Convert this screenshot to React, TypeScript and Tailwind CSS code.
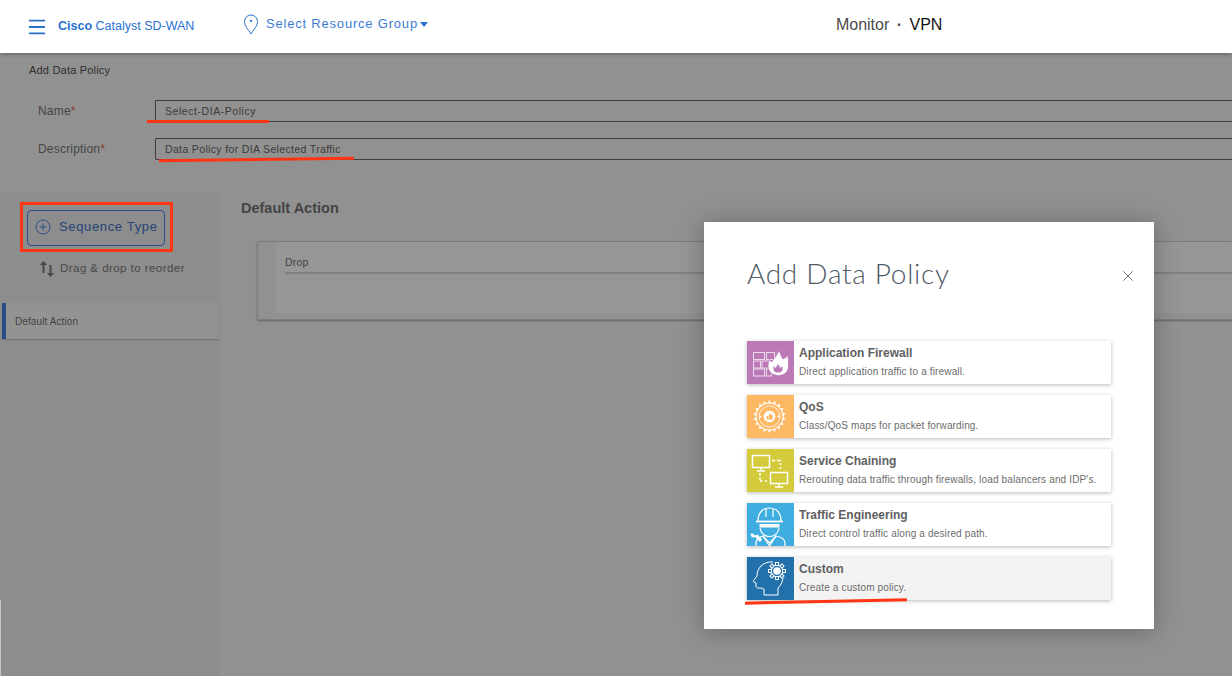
import { Menu, X } from 'lucide-react';

const FONT = "font-['Liberation_Sans',Arial,sans-serif]";

// ─── Tile icons ───────────────────────────────────────────────────────────────

function FirewallIcon() {
  return (
    <svg viewBox="0 0 47 43" className="w-[47px] h-[43px]" fill="none" stroke="#ecd9ea" strokeWidth="1">
      <rect x="6.500" y="11.500" width="11" height="7" />
      <rect x="19.500" y="11.500" width="8" height="7" />
      <rect x="6.500" y="20" width="7" height="7" />
      <rect x="15" y="20" width="8" height="7" />
      <rect x="6.500" y="28" width="11" height="7" />
      <rect x="19.500" y="28" width="5" height="7" />
      <path
        d="M21 25c0-3 1-5 1.500-6.500 1 1 1.500 2 2 2.500 2-3 6-7 7.500-12 1 3 2 6 4 9 1.500-1 4-2 5-3.500.5 4 .5 7 .5 10.500 0 5.500-4 9.500-10 9.500S21 30.500 21 25z"
        fill="#fff"
        stroke="#bb7ab7"
        strokeWidth="0.800"
      />
      <path d="M26.500 25l2 2 2.500-4 2.500 4 2-2v4c-1 2-2 2.500-4.500 2.500s-3.500-.5-4.500-2.500z" fill="#bb7ab7" stroke="none" />
    </svg>
  );
}

function QosIcon() {
  const teeth = Array.from({ length: 18 }, (_, i) => (i * 360) / 18);
  return (
    <svg viewBox="0 0 47 43" className="w-[47px] h-[43px]" fill="none" stroke="#fff">
      <circle cx="22.500" cy="21.500" r="13.500" strokeWidth="1" />
      <circle cx="22.500" cy="21.500" r="10.500" strokeWidth="0.800" />
      {teeth.map((a) => (
        <path key={a} d="M22.500 5l2 3h-4z" fill="#fff" stroke="none" opacity="0.85" transform={`rotate(${a} 22.500 21.500)`} />
      ))}
      <circle cx="22.500" cy="21.500" r="5.800" fill="#fff" stroke="none" />
      <circle cx="13.500" cy="21.500" r="1" fill="#fff" stroke="none" />
      <circle cx="31.500" cy="21.500" r="1" fill="#fff" stroke="none" />
      <path d="M19.500 21h1.500v3.500h-1.500zM21.500 21l1.500-3c1 0 1 1 1 2h2l-.5 4.500h-4z" fill="#fdb863" stroke="none" />
    </svg>
  );
}

function ChainingIcon() {
  return (
    <svg viewBox="0 0 47 43" className="w-[47px] h-[43px]" fill="none" stroke="#fff" strokeWidth="1.500">
      <rect x="5.500" y="6.500" width="17" height="12" />
      <path d="M14 18.500v2.500M10 22h8" />
      <rect x="23.500" y="23.500" width="17" height="11" />
      <path d="M32 34.500v2.500M28 38h8" />
      <path d="M25 11.500h3M30 11.500h4M33.500 14v2M33.500 18v2" />
      <path d="M13 24v2.500M13 28.500v3M13 32h2.500M18 32h2" />
    </svg>
  );
}

function EngineerIcon() {
  return (
    <svg viewBox="0 0 47 43" className="w-[47px] h-[43px]" fill="none" stroke="#fff" strokeWidth="1.200">
      <path d="M11 18c0-8 4.500-13 11.500-13S34 10 34 18" />
      <path d="M19 6v8M26 6v8" />
      <path d="M9 18.500h27" strokeWidth="1.800" />
      <path d="M12.500 21h20v3.500h-20z" fill="#fff" stroke="none" />
      <path d="M13 25c1 5 4.500 8.500 9.500 8.500s8.500-3.500 9.500-8.500" />
      <path d="M9 43v-3c0-3 3-6 7-7l6.500 7 6.500-7c5 1 9 3 9 7v3" />
      <path d="M16 33l6.500 10M29 33l-6.500 10" />
      <path d="M5 30l3 2.500 2.500-1 4.500 5-2 2.500-5-5-3 .5-1.500-3z" fill="#fff" stroke="none" />
    </svg>
  );
}

function HeadIcon() {
  const teeth = Array.from({ length: 8 }, (_, i) => i * 45);
  return (
    <svg viewBox="0 0 47 43" className="w-[47px] h-[43px]" fill="none" stroke="#fff" strokeWidth="1">
      <path d="M17 38v-6c-2-1-4-1-6-1-1 0-2-1-2-2v-3l-2-1c-1 0-1-1 0-2l3-4c0-8 6-14 14-14h2M36 21c-1 5-2 7-5 10v7h-14" />
      <circle cx="30" cy="14" r="6" fill="#2371aa" />
      {teeth.map((a) => (
        <rect key={a} x="28.500" y="5.500" width="3" height="3" fill="#2371aa" transform={`rotate(${a} 30 14)`} />
      ))}
      <circle cx="30" cy="14" r="3.800" fill="#fff" stroke="none" />
    </svg>
  );
}

// ─── Policy tiles ─────────────────────────────────────────────────────────────

const TILES = [
  { title: 'Application Firewall', text: 'Direct application traffic to a firewall.', color: 'bg-[#bb7ab7]', Icon: FirewallIcon },
  { title: 'QoS', text: 'Class/QoS maps for packet forwarding.', color: 'bg-[#fdb863]', Icon: QosIcon },
  { title: 'Service Chaining', text: "Rerouting data traffic through firewalls, load balancers and IDP's.", color: 'bg-[#d3cb3c]', Icon: ChainingIcon },
  { title: 'Traffic Engineering', text: 'Direct control traffic along a desired path.', color: 'bg-[#40ade0]', Icon: EngineerIcon },
  { title: 'Custom', text: 'Create a custom policy.', color: 'bg-[#2371aa]', Icon: HeadIcon, active: true },
];

function Tile({ title, text, color, Icon, active }: (typeof TILES)[number]) {
  return (
    <div className={`flex h-[43px] w-[364px] shadow-[0_1px_4px_rgba(0,0,0,0.28)] ${active ? 'bg-[#f3f3f3]' : 'bg-white'}`}>
      <div className={`w-[47px] shrink-0 ${color}`}>
        <Icon />
      </div>
      <div className="pl-[5px] pt-[5px]">
        <div className="text-[12px] leading-[14px] font-bold text-[#606060]">{title}</div>
        <div className="mt-[6px] text-[10px] leading-[12px] tracking-[0.15px] text-[#6b6b6b] whitespace-nowrap">{text}</div>
      </div>
    </div>
  );
}

function Mark({ className }: { className: string }) {
  return <div className={`absolute h-[3px] bg-[#ff3514] ${className}`} />;
}

export default function App() {
  return (
    <div className={`relative w-[1232px] h-[676px] overflow-hidden bg-[#919191] ${FONT}`}>
      {/* Header */}
      <header className="relative z-10 flex items-center h-[53px] bg-white shadow-[0_1px_4px_rgba(0,0,0,0.35)]">
        <Menu className="ml-[26px] w-[22px] h-[22px] text-[#2a6fc4]" strokeWidth={2} />
        <div className="ml-[10px] w-[136px] text-[12.500px] text-[#2a72d0] whitespace-nowrap">
          <span className="font-bold">Cisco</span> Catalyst SD-WAN
        </div>
        <div className="ml-[49px] flex items-center -mt-[5px]">
          <svg viewBox="0 0 16 21" className="w-[16px] h-[21px]" fill="none" stroke="#2a72d0" strokeWidth="1">
            <path d="M8 20C5 15 1.500 12 1.500 7.500a6.500 6.500 0 0 1 13 0C14.500 12 11 15 8 20z" />
            <circle cx="8" cy="7" r="0.800" fill="#2a72d0" />
          </svg>
          <span className="ml-[7px] text-[13px] tracking-[0.8px] text-[#3a7cd2]">Select Resource Group</span>
          <svg viewBox="0 0 8 5" className="ml-[2px] w-[8px] h-[5px]" fill="#2a72d0">
            <path d="M0 0h8L4 5z" />
          </svg>
        </div>
        <div className="ml-[408px] -mt-[4px] text-[16px] text-[#4a4a4a] whitespace-nowrap">
          Monitor <span className="mx-[3px] font-bold">·</span> <span className="text-[#111]">VPN</span>
        </div>
      </header>

      {/* Form */}
      <div className="pl-[29px] pt-[11px] h-[139px]">
        <div className="text-[11px] leading-[13px] tracking-[0.2px] text-[#2e2e2e]">Add Data Policy</div>
        <div className="mt-[23px] flex items-center">
          <label className="w-[126px] pl-[9px] text-[12px] tracking-[0.2px] text-[#454545]">
            Name<span className="text-[#8b3a32]">*</span>
          </label>
          <div className="flex-1 h-[22px] border border-r-0 border-[#3f3f3f] rounded-l-[2px] pl-[9px] text-[10.500px] leading-[20px] tracking-[0.55px] text-[#3a3a3a]">
            Select-DIA-Policy
          </div>
        </div>
        <div className="mt-[16px] flex items-center">
          <label className="w-[126px] pl-[9px] text-[12px] tracking-[0.2px] text-[#454545]">
            Description<span className="text-[#8b3a32]">*</span>
          </label>
          <div className="flex-1 h-[22px] border border-r-0 border-[#3f3f3f] rounded-l-[2px] pl-[9px] text-[10.500px] leading-[20px] tracking-[0.35px] text-[#3a3a3a]">
            Data Policy for DIA Selected Traffic
          </div>
        </div>
      </div>

      {/* Body */}
      <div className="flex h-[484px]">
        <aside className="w-[220px] shrink-0 bg-[#8d8d8d] pt-[18px]">
          <div className="ml-[27px] flex items-center w-[138px] h-[36px] border border-[#2d5288] rounded-[4px] pl-[7px] pb-[2px] text-[#254478]">
            <svg viewBox="0 0 16 16" className="w-[16px] h-[16px]" fill="none" stroke="#2d5288" strokeWidth="1">
              <circle cx="8" cy="8" r="7" />
              <path d="M8 4.500v7M4.500 8h7" />
            </svg>
            <span className="ml-[8px] text-[13px] tracking-[0.65px]">Sequence Type</span>
          </div>
          <div className="ml-[40px] mt-[14px] flex items-center text-[#484848]">
            <svg viewBox="0 0 14 16" className="w-[14px] h-[16px]" fill="#484848">
              <path d="M3.500 0L7 4H4.500v8h-2V4H0zM10.500 16L7 12h2.500V4h2v8H14z" />
            </svg>
            <span className="ml-[6px] text-[11.500px] tracking-[0.45px]">Drag &amp; drop to reorder</span>
          </div>
          <div className="mt-[26px] ml-[2px] w-[217px] h-[36px] flex items-center bg-[#939393] border-l-[4px] border-[#2a4d85] shadow-[0_1px_1px_rgba(0,0,0,0.15)] pl-[9px] text-[10px] tracking-[0.1px] text-[#444]">
            Default Action
          </div>
        </aside>
        <main className="flex-1 pl-[21px] pt-[8px]">
          <h2 className="text-[14.500px] leading-[17px] font-bold text-[#444]">Default Action</h2>
          <div className="mt-[24px] ml-[16px] h-[79px] border border-r-0 border-[#7d7d7d] rounded-l-[2px] shadow-[0_1px_2px_rgba(0,0,0,0.3)] pl-[18px]">
            <div className="h-[71px] bg-[#969696] pl-[9px] pt-[14px]">
              <div className="text-[10.500px] leading-[13px] tracking-[0.2px] text-[#444]">Drop</div>
              <div className="mt-[3px] h-[2px] bg-[#808080]" />
            </div>
          </div>
        </main>
      </div>

      {/* Sliver left over at the page edge */}
      <div className="absolute left-0 top-[600px] w-px h-[76px] bg-[#c4c4c4]" />

      {/* Modal */}
      <div className="absolute left-[704px] top-[222px] w-[450px] h-[407px] bg-white shadow-[0_2px_24px_rgba(0,0,0,0.28)] pl-[43px]">
        <div className="flex items-start justify-between pr-[17px] pt-[33px]">
          <h1 className="font-['Lato',sans-serif] font-light text-[28px] leading-[36px] tracking-[0.7px] text-[#4f5a66]">Add Data Policy</h1>
          <X className="mt-[12px] w-[18px] h-[18px] text-[#4f5a66]" strokeWidth={1.100} />
        </div>
        <div className="mt-[50px] flex flex-col gap-[11px]">
          {TILES.map((t) => (
            <Tile key={t.title} {...t} />
          ))}
        </div>
      </div>

      {/* Red review marks */}
      <div className="absolute left-[20px] top-[202px] w-[153px] h-[50px] border-[3px] border-[#ff3514]" />
      <Mark className="left-[147px] top-[120px] w-[122px]" />
      <Mark className="left-[159px] top-[158px] w-[195px] -rotate-[0.8deg]" />
      <Mark className="left-[745px] top-[600px] w-[162px] -rotate-[1.2deg]" />
    </div>
  );
}
